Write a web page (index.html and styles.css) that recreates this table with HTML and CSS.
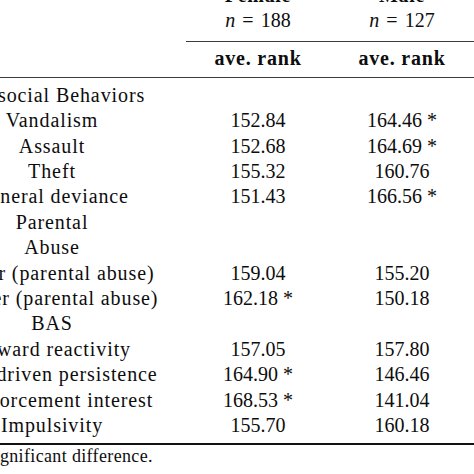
FILE: index.html
```html
<!DOCTYPE html>
<html>
<head>
<meta charset="utf-8">
<link rel="stylesheet" href="styles.css">
</head>
<body>
<div class="page">
  <table class="ranks">
    <colgroup>
      <col class="c-label">
      <col class="c-f">
      <col class="c-m">
    </colgroup>
    <thead>
      <tr class="h-sex">
        <th></th><th>Female</th><th>Male</th>
      </tr>
      <tr class="h-n">
        <th class="blank"></th><th><i>n</i> = 188</th><th><i>n</i> = 127</th>
      </tr>
      <tr class="h-stat">
        <th></th><th>ave. rank</th><th>ave. rank</th>
      </tr>
    </thead>
    <tbody>
      <tr class="first"><td class="lab">Antisocial Behaviors</td><td></td><td></td></tr>
      <tr><td class="lab">Vandalism</td><td>152.84</td><td>164.46 *</td></tr>
      <tr><td class="lab">Assault</td><td>152.68</td><td>164.69 *</td></tr>
      <tr><td class="lab">Theft</td><td>155.32</td><td>160.76</td></tr>
      <tr><td class="lab">General deviance</td><td>151.43</td><td>166.56 *</td></tr>
      <tr><td class="lab">Parental</td><td></td><td></td></tr>
      <tr><td class="lab">Abuse</td><td></td><td></td></tr>
      <tr><td class="lab">Father (parental abuse)</td><td>159.04</td><td>155.20</td></tr>
      <tr><td class="lab">Mother (parental abuse)</td><td>162.18 *</td><td>150.18</td></tr>
      <tr><td class="lab">BAS</td><td></td><td></td></tr>
      <tr><td class="lab">Reward reactivity</td><td>157.05</td><td>157.80</td></tr>
      <tr><td class="lab">Goal-driven persistence</td><td>164.90 *</td><td>146.46</td></tr>
      <tr><td class="lab">Reinforcement interest</td><td>168.53 *</td><td>141.04</td></tr>
      <tr class="last"><td class="lab">Impulsivity</td><td>155.70</td><td>160.18</td></tr>
    </tbody>
  </table>
  <p class="note">* Significant difference.</p>
</div>
</body>
</html>
```

FILE: styles.css
```css
html, body {
  margin: 0;
  padding: 0;
  background: #ffffff;
  overflow: hidden;
}

.page {
  width: 560px;
  margin-left: -82px;
  margin-top: -17px;
  font-family: "Liberation Serif", "Times New Roman", serif;
  color: #0d0d0d;
}

.ranks {
  border-collapse: separate;
  border-spacing: 0;
  table-layout: fixed;
  width: 558px;
  font-size: 20px;
  line-height: 25.4px;
}

.c-label { width: 268px; }
.c-f { width: 144px; }
.c-m { width: 146px; }

.ranks th,
.ranks td {
  padding: 0;
  text-align: center;
  white-space: nowrap;
  vertical-align: top;
}

.ranks td:nth-child(3),
.ranks th:nth-child(3) {
  padding-right: 2px;
}

.ranks th {
  font-weight: bold;
  letter-spacing: 0.7px;
}

.h-n th {
  font-weight: normal;
  letter-spacing: 0;
  word-spacing: 2px;
  padding-bottom: 7px;
  border-bottom: 1px solid #3c3c3c;
}

.h-n th.blank {
  border-bottom: none;
}

.h-stat th {
  padding-top: 4px;
  padding-bottom: 5.5px;
  border-bottom: 1px solid #3c3c3c;
  letter-spacing: 0.8px;
}

.lab {
  letter-spacing: 0.9px;
}

.first td {
  padding-top: 5px;
}

.last td {
  padding-bottom: 5px;
  border-bottom: 2px solid #111111;
}

.note {
  margin: 0 0 0 52px;
  font-size: 18px;
  line-height: 22px;
  letter-spacing: 0.35px;
}
```
